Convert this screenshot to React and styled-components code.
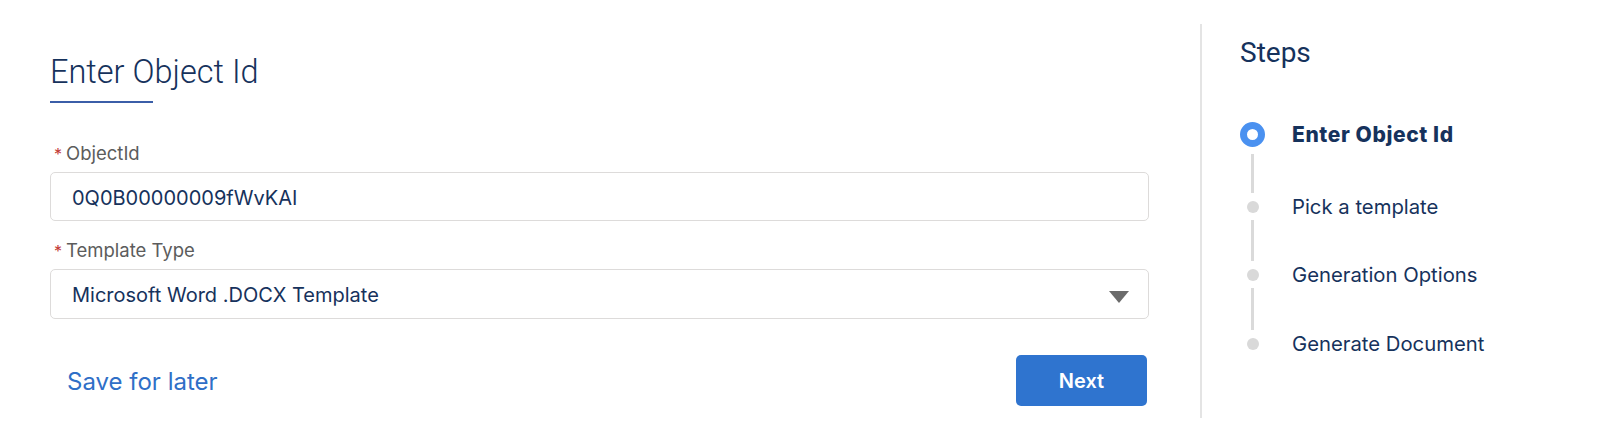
import React from "react";
import styled, { createGlobalStyle } from "styled-components";

const GlobalStyle = createGlobalStyle`
  html, body {
    margin: 0;
    padding: 0;
    background: #ffffff;
  }
  body {
    font-family: Inter, "Noto Sans", sans-serif;
    color: #16325c;
  }
`;

const Page = styled.div`
  display: flex;
  width: 1600px;
  height: 438px;
  box-sizing: border-box;
  padding-left: 50px;
  gap: 51px;
`;

const Main = styled.main`
  width: 1099px;
  display: flex;
  flex-direction: column;
`;

const Heading = styled.h1`
  margin: 54px 0 0;
  font-family: Roboto, "Liberation Sans", sans-serif;
  font-weight: 300;
  font-size: 32.5px;
  line-height: 36px;
  color: #16325c;
`;

const HeadingRule = styled.div`
  width: 103px;
  height: 2px;
  margin-top: 11px;
  background: #3b5ea8;
`;

const Field = styled.div`
  display: flex;
  flex-direction: column;
  gap: 6px;
  margin-top: ${(p) => p.$top}px;
`;

const Label = styled.label`
  display: flex;
  align-items: baseline;
  font-size: 18.5px;
  line-height: 24px;
  color: #5c5c5c;
`;

const Required = styled.abbr`
  color: #c23934;
  font-size: 16px;
  margin: 0 4px 0 4px;
  text-decoration: none;
`;

const Box = styled.div`
  box-sizing: border-box;
  height: ${(p) => p.$h}px;
  display: flex;
  align-items: center;
  justify-content: space-between;
  padding: 2px 19px 0 21px;
  border: 1px solid #dddbda;
  border-radius: 5px;
  background: #fff;
  font-size: 20px;
  line-height: 24px;
  color: #16325c;
`;

const Caret = styled.span`
  width: 0;
  height: 0;
  margin-top: 4px;
  border-left: 10px solid transparent;
  border-right: 10px solid transparent;
  border-top: 12px solid #6b6b6b;
`;

const Footer = styled.div`
  display: flex;
  align-items: center;
  justify-content: space-between;
  margin-top: 36px;
  padding-right: 2px;
`;

const LinkButton = styled.button`
  border: 0;
  background: none;
  padding: 3px 0 0 17px;
  font-family: Inter, "Noto Sans", sans-serif;
  font-size: 24px;
  line-height: 28px;
  color: #2f6fc7;
  cursor: pointer;
`;

const PrimaryButton = styled.button`
  width: 131px;
  height: 51px;
  border: 0;
  border-radius: 5px;
  background: #2f74cf;
  color: #fff;
  font-family: Inter, "Noto Sans", sans-serif;
  font-weight: 600;
  font-size: 20px;
  line-height: 24px;
  cursor: pointer;
`;

const Aside = styled.aside`
  box-sizing: border-box;
  margin-top: 24px;
  height: 394px;
  flex: 1;
  border-left: 2px solid #e4e4e4;
  padding: 12px 0 0 38px;
`;

const AsideTitle = styled.h2`
  margin: 0;
  font-family: Roboto, "Liberation Sans", sans-serif;
  font-weight: 400;
  font-size: 28px;
  line-height: 34px;
  color: #16325c;
`;

const StepList = styled.ol`
  list-style: none;
  margin: 52px 0 0;
  padding: 0;
`;

const Step = styled.li`
  display: grid;
  grid-template-columns: 25px 1fr;
  grid-template-rows: 25px 1fr;
  column-gap: 27px;
  height: ${(p) => p.$h}px;
`;

const Marker = styled.span`
  grid-column: 1;
  grid-row: 1;
  justify-self: center;
  align-self: center;
  box-sizing: border-box;
  width: ${(p) => (p.$active ? 25 : 12)}px;
  height: ${(p) => (p.$active ? 25 : 12)}px;
  border-radius: 50%;
  background: ${(p) => (p.$active ? "#fff" : "#d9d9d9")};
  border: ${(p) => (p.$active ? "7px solid #4a91f0" : "none")};
`;

const Connector = styled.span`
  grid-column: 1;
  grid-row: 2;
  justify-self: center;
  width: 3px;
  margin: ${(p) => (p.$afterActive ? 7 : 1)}px 0 1px;
  background: #dadada;
`;

const StepText = styled.span`
  grid-column: 2;
  grid-row: 1;
  align-self: center;
  white-space: nowrap;
  font-size: ${(p) => (p.$active ? 21 : 20.3)}px;
  letter-spacing: ${(p) => (p.$active ? 0.6 : 0)}px;
  line-height: 24px;
  font-weight: ${(p) => (p.$active ? 800 : 400)};
  color: #16325c;
`;

const steps = [
  { label: "Enter Object Id", active: true, h: 72 },
  { label: "Pick a template", h: 68 },
  { label: "Generation Options", h: 69 },
  { label: "Generate Document", h: 69, last: true },
];

export default function App() {
  return (
    <>
      <GlobalStyle />
      <Page>
        <Main>
          <Heading>Enter Object Id</Heading>
          <HeadingRule />

          <Field $top={38}>
            <Label>
              <Required title="required">*</Required>ObjectId
            </Label>
            <Box $h={49}>0Q0B00000009fWvKAI</Box>
          </Field>

          <Field $top={17}>
            <Label>
              <Required title="required">*</Required>Template Type
            </Label>
            <Box $h={50}>
              <span>Microsoft Word .DOCX Template</span>
              <Caret />
            </Box>
          </Field>

          <Footer>
            <LinkButton>Save for later</LinkButton>
            <PrimaryButton>Next</PrimaryButton>
          </Footer>
        </Main>

        <Aside>
          <AsideTitle>Steps</AsideTitle>
          <StepList>
            {steps.map((s) => (
              <Step key={s.label} $h={s.h}>
                <Marker $active={s.active} />
                {!s.last && <Connector $afterActive={s.active} />}
                <StepText $active={s.active}>{s.label}</StepText>
              </Step>
            ))}
          </StepList>
        </Aside>
      </Page>
    </>
  );
}
